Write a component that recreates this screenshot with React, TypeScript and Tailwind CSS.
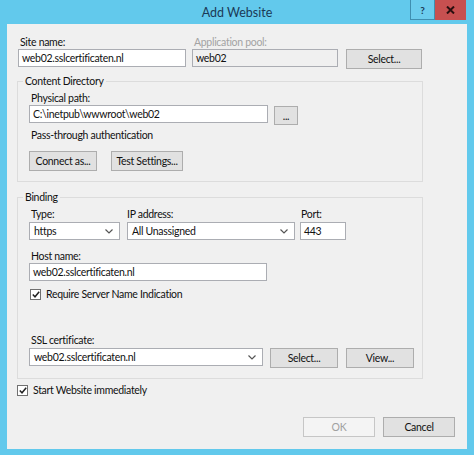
import React from "react";

// Win8-style "Add Website" dialog (IIS Manager)
const ui = "font-['Segoe_UI','Lato',sans-serif] text-[10.5px] leading-[14px] tracking-[-0.3px] text-[#111]";

function TextBox({ value, w, disabled }: { value: string; w: string; disabled?: boolean }) {
  return (
    <div
      className={`${w} h-[18px] border border-[#abadb3] px-[3px] flex items-center ${
        disabled ? "bg-[#f0f0f0]" : "bg-white"
      }`}
    >
      <span className="whitespace-nowrap">{value}</span>
    </div>
  );
}

function ComboBox({ value, w }: { value: string; w: string }) {
  return (
    <div className={`${w} h-[18px] border border-[#abadb3] bg-white pl-[4px] pr-[6px] flex items-center justify-between`}>
      <span className="whitespace-nowrap">{value}</span>
      <svg width="8" height="5" viewBox="0 0 8 5" className="shrink-0">
        <polyline points="0.5,0.5 4,4 7.5,0.5" fill="none" stroke="#555" strokeWidth="1.2" />
      </svg>
    </div>
  );
}

function Button({ label, w, h = "h-[20px]", disabled }: { label: string; w: string; h?: string; disabled?: boolean }) {
  return (
    <div
      className={`${w} ${h} shrink-0 whitespace-nowrap border flex items-center justify-center ${
        disabled ? "border-[#c6c6c6] bg-[#f4f4f4] text-[#a0a0a0]" : "border-[#adadad] bg-[#e1e1e1]"
      }`}
    >
      {label}
    </div>
  );
}

function CheckBox({ label, gap }: { label: string; gap: string }) {
  return (
    <div className="flex items-center h-[14px]">
      <div className="w-[11px] h-[11px] border border-[#707070] bg-white flex items-center justify-center">
        <svg width="8" height="7" viewBox="0 0 8 7">
          <polyline points="0.8,3.5 3,5.8 7.2,0.8" fill="none" stroke="#222" strokeWidth="1.5" />
        </svg>
      </div>
      <span className={gap}>{label}</span>
    </div>
  );
}

function Group({ title, children }: { title: string; children: React.ReactNode }) {
  return (
    <fieldset className="w-[406px] border border-[#dcdcdc]">
      <legend className="ml-[5px] px-[2px] leading-[14px]">{title}</legend>
      <div className="pl-[11px] pb-[10px]">{children}</div>
    </fieldset>
  );
}

export default function App() {
  return (
    <div className={`${ui} w-[474px] h-[455px] bg-[#62c9ec] flex flex-col`}>
      {/* caption */}
      <div className="relative h-[24px] flex items-center justify-center">
        <span className="text-[12.5px] leading-[16px] tracking-normal text-[#1b3a56] mt-[2px]">Add Website</span>
        <div className="absolute top-0 right-[8px] flex">
          <div className="w-[25px] h-[20px] border border-[#3f8fb0] border-t-0 bg-[#6ccdee] flex items-center justify-center text-[10px] font-bold text-[#1b3a56]">
            ?
          </div>
          <div className="w-[31px] h-[20px] bg-[#c75050] flex items-center justify-center">
            <svg width="9" height="8" viewBox="0 0 9 8">
              <path d="M1 0.5 L8 7.5 M8 0.5 L1 7.5" stroke="#2a0f0f" strokeWidth="2" />
            </svg>
          </div>
        </div>
      </div>

      {/* client area */}
      <div className="mx-[7px] h-[425px] bg-[#f0f0f0] pl-[10px] pr-[12px] pt-[11px] flex flex-col">
        <div className="flex items-start pl-[1px]">
          <div className="w-[168px]">
            <div className="ml-[2px]">Site name:</div>
            <TextBox value="web02.sslcertificaten.nl" w="w-[168px]" />
          </div>
          <div className="ml-[6px] w-[146px]">
            <div className="ml-[2px] text-[#a3a3a3]">Application pool:</div>
            <TextBox value="web02" w="w-[146px]" disabled />
          </div>
          <div className="ml-[8px] mt-[14px]">
            <Button label="Select..." w="w-[76px]" />
          </div>
        </div>

        <div className="mt-[5px]">
          <Group title="Content Directory">
            <div className="mt-[3px] ml-[2px]">Physical path:</div>
            <div className="flex items-start">
              <TextBox value="C:\inetpub\wwwroot\web02" w="w-[239px]" />
              <div className="ml-[6px] mt-[1px]">
                <Button label="..." w="w-[24px]" h="h-[19px]" />
              </div>
            </div>
            <div className="mt-[3px] ml-[2px]">Pass-through authentication</div>
            <div className="mt-[9px] flex gap-[14px]">
              <Button label="Connect as..." w="w-[68px]" />
              <Button label="Test Settings..." w="w-[72px]" />
            </div>
          </Group>
        </div>

        <div className="mt-[8px]">
          <Group title="Binding">
            <div className="mt-[3px] flex items-start">
              <div className="w-[91px]">
                <div className="ml-[2px] mb-[1px]">Type:</div>
                <ComboBox value="https" w="w-[91px]" />
              </div>
              <div className="ml-[7px] w-[168px]">
                <div className="mb-[1px]">IP address:</div>
                <ComboBox value="All Unassigned" w="w-[168px]" />
              </div>
              <div className="ml-[5px] w-[46px]">
                <div className="ml-[1px] mb-[1px]">Port:</div>
                <TextBox value="443" w="w-[46px]" />
              </div>
            </div>
            <div className="mt-[9px] ml-[2px]">Host name:</div>
            <TextBox value="web02.sslcertificaten.nl" w="w-[238px]" />
            <div className="mt-[6px] ml-[1px]">
              <CheckBox label="Require Server Name Indication" gap="ml-[5px]" />
            </div>
            <div className="mt-[32px] ml-[2px] mb-[1px]">SSL certificate:</div>
            <div className="flex items-start">
              <ComboBox value="web02.sslcertificaten.nl" w="w-[234px]" />
              <div className="ml-[7px] flex gap-[8px]">
                <Button label="Select..." w="w-[68px]" />
                <Button label="View..." w="w-[68px]" />
              </div>
            </div>
          </Group>
        </div>

        <div className="mt-[4px]">
          <CheckBox label="Start Website immediately" gap="ml-[5px]" />
        </div>

        <div className="mt-[20px] flex justify-end gap-[8px]">
          <Button label="OK" w="w-[72px]" disabled />
          <Button label="Cancel" w="w-[72px]" />
        </div>
      </div>
    </div>
  );
}
